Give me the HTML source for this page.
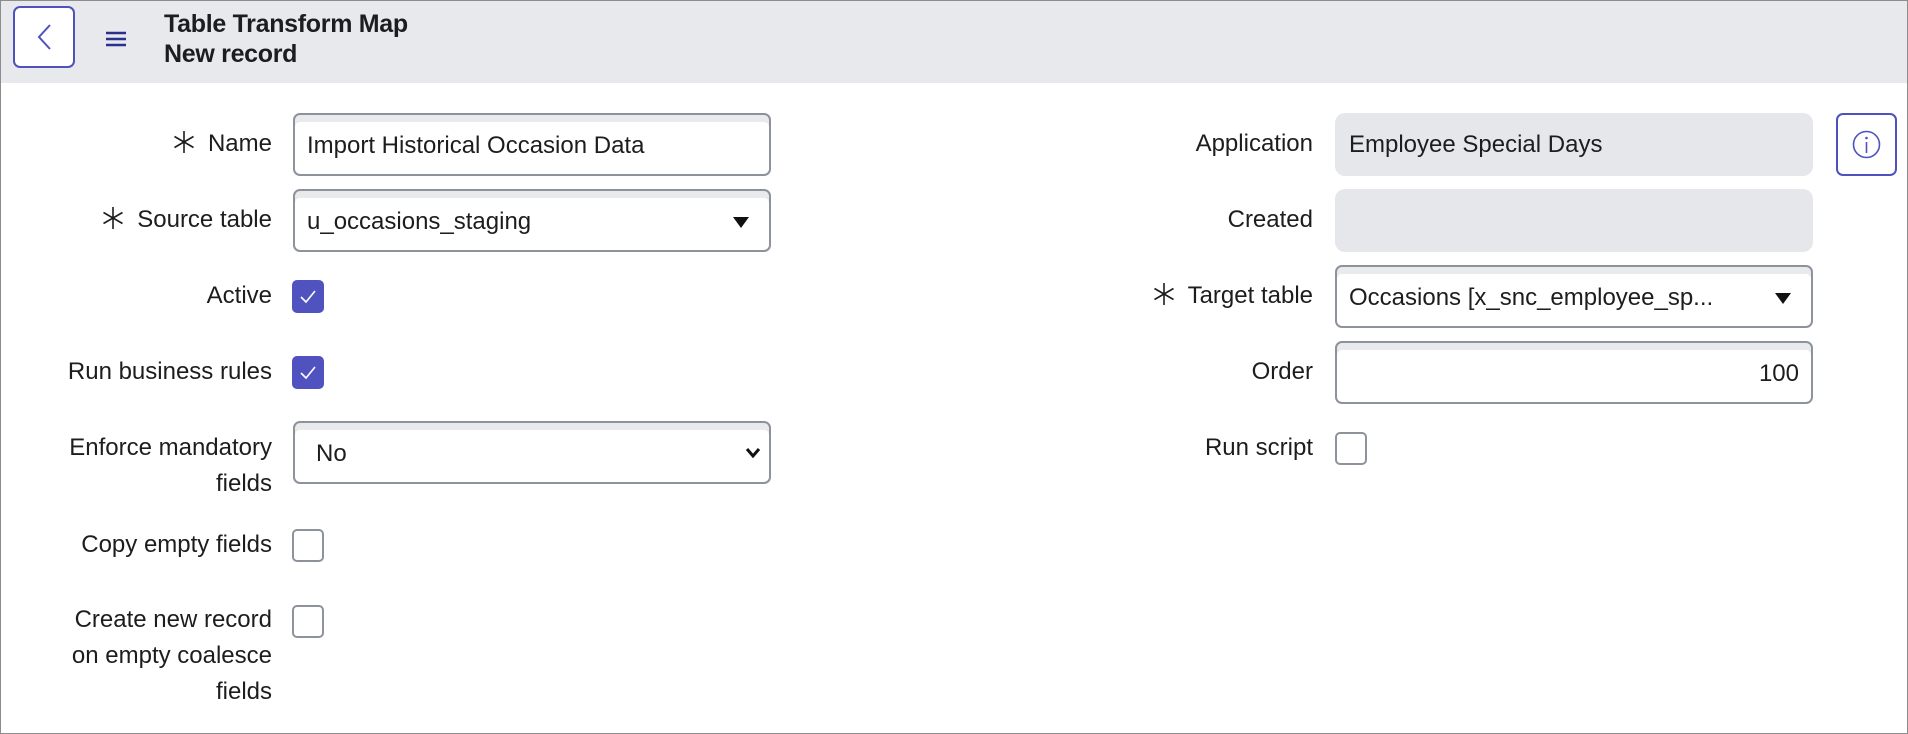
<!DOCTYPE html>
<html><head><meta charset="utf-8"><style>
*{box-sizing:border-box;margin:0;padding:0}
body{width:1908px;height:734px;background:#fff;font-family:"Liberation Sans",sans-serif;color:#1d1d1f;position:relative;overflow:hidden}
.frame{position:absolute;left:0;top:0;width:1908px;height:734px;border:1px solid #8c8c8c}
.hdr{position:absolute;left:1px;top:1px;width:1906px;height:82px;background:#e8e9ed}
.back{position:absolute;left:13px;top:6px;width:62px;height:62px;border:2px solid #4f52bd;border-radius:7px;background:#fff}
.ttl{position:absolute;left:164px;font-size:25px;font-weight:bold;color:#1d1d1f;letter-spacing:-0.3px}
.lbl{position:absolute;font-size:24px;text-align:right;line-height:36px;color:#1d1d1f}
.inp{position:absolute;height:63px;border:2px solid #8d929c;border-radius:7px;background:#fff;box-shadow:inset 0 7px 0 #e9eaec;font-size:24px;padding:0 12px;line-height:59px;padding-top:1px}
.ro{position:absolute;height:63px;border-radius:10px;background:#e6e7ea;font-size:24px;padding:0 14px;line-height:63px}
.cb{position:absolute;width:32px;height:33px;border:2px solid #8d929c;border-radius:5px;background:#fff}
.cb.on{background:#5053bf;border-color:#5053bf}
.ast{display:inline-block;width:24px;height:24px;margin-right:12px;vertical-align:-3px}
.tri{position:absolute;right:20px;top:26px;width:0;height:0;border-left:8px solid transparent;border-right:8px solid transparent;border-top:11px solid #111}
</style></head><body>
<div class="frame"></div>
<div class="hdr"></div>
<div class="back"><svg width="62" height="62" style="position:absolute;left:-2px;top:-2px"><path d="M37 19 L26 31 L37 43" stroke="#4f52bd" stroke-width="2" fill="none"/></svg></div>
<svg style="position:absolute;left:105px;top:30px" width="22" height="18"><path d="M1 3H21M1 9H21M1 15H21" stroke="#2d2f8f" stroke-width="2.4"/></svg>
<div class="ttl" style="top:10px">Table Transform Map</div>
<div class="ttl" style="top:40px">New record</div>

<div class="lbl" style="right:1636px;top:126px"><svg class="ast" viewBox="0 0 24 24"><path d="M12 1V23M2.5 6.5L21.5 17.5M2.5 17.5L21.5 6.5" stroke="#1d1d1f" stroke-width="1.6"/></svg>Name</div>
<div class="inp" style="left:293px;top:113px;width:478px">Import Historical Occasion Data</div>
<div class="lbl" style="right:1636px;top:202px"><svg class="ast" viewBox="0 0 24 24"><path d="M12 1V23M2.5 6.5L21.5 17.5M2.5 17.5L21.5 6.5" stroke="#1d1d1f" stroke-width="1.6"/></svg>Source table</div>
<div class="inp" style="left:293px;top:189px;width:478px">u_occasions_staging<div class="tri"></div></div>
<div class="lbl" style="right:1636px;top:278px">Active</div>
<div class="cb on" style="left:292px;top:280px"><svg width="28" height="29"><path d="M7 15 L12 20 L21 9" stroke="#fff" stroke-width="1.6" fill="none"/></svg></div>
<div class="lbl" style="right:1636px;top:354px">Run business rules</div>
<div class="cb on" style="left:292px;top:356px"><svg width="28" height="29"><path d="M7 15 L12 20 L21 9" stroke="#fff" stroke-width="1.6" fill="none"/></svg></div>
<div class="lbl" style="right:1636px;top:430px">Enforce mandatory<br>fields</div>
<div class="inp" style="left:293px;top:421px;width:478px;padding-left:21px">No<svg style="position:absolute;right:8px;top:24px" width="16" height="12"><path d="M2 2 L8 9 L14 2" stroke="#111" stroke-width="3" fill="none"/></svg></div>
<div class="lbl" style="right:1636px;top:527px">Copy empty fields</div>
<div class="cb" style="left:292px;top:529px"></div>
<div class="lbl" style="right:1636px;top:602px">Create new record<br>on empty coalesce<br>fields</div>
<div class="cb" style="left:292px;top:605px"></div>

<div class="lbl" style="right:595px;top:126px">Application</div>
<div class="ro" style="left:1335px;top:113px;width:478px">Employee Special Days</div>
<div style="position:absolute;left:1836px;top:113px;width:61px;height:63px;border:2px solid #4f52bd;border-radius:7px"><svg width="58" height="60"><circle cx="28.5" cy="29.5" r="13" stroke="#4f52bd" stroke-width="1.6" fill="none"/><path d="M28.5 27V38" stroke="#4f52bd" stroke-width="1.6"/><circle cx="28.5" cy="23" r="1.3" fill="#4f52bd"/></svg></div>
<div class="lbl" style="right:595px;top:202px">Created</div>
<div class="ro" style="left:1335px;top:189px;width:478px"></div>
<div class="lbl" style="right:595px;top:278px"><svg class="ast" viewBox="0 0 24 24"><path d="M12 1V23M2.5 6.5L21.5 17.5M2.5 17.5L21.5 6.5" stroke="#1d1d1f" stroke-width="1.6"/></svg>Target table</div>
<div class="inp" style="left:1335px;top:265px;width:478px">Occasions [x_snc_employee_sp...<div class="tri"></div></div>
<div class="lbl" style="right:595px;top:354px">Order</div>
<div class="inp" style="left:1335px;top:341px;width:478px;text-align:right">100</div>
<div class="lbl" style="right:595px;top:430px">Run script</div>
<div class="cb" style="left:1335px;top:432px"></div>
</body></html>
